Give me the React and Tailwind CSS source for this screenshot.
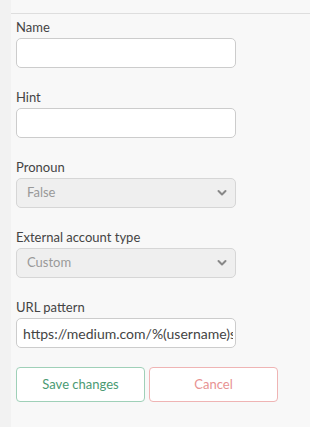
import React from "react";

function Label({ children }) {
  return <label className="block text-[13px] leading-[16px] text-[#444] mb-[3px]">{children}</label>;
}

function Chevron() {
  return (
    <svg className="absolute right-[9px] top-1/2 -translate-y-1/2" width="10" height="7" viewBox="0 0 10 7" fill="none">
      <path d="M1.5 1.5 L5 5 L8.5 1.5" stroke="#888" strokeWidth="2" strokeLinecap="round" strokeLinejoin="round" />
    </svg>
  );
}

function Select({ value }) {
  return (
    <div className="relative w-[220px] h-[30px]">
      <select
        disabled
        value={value}
        onChange={() => {}}
        className="appearance-none w-full h-full rounded-[5px] border border-[#d6d6d6] bg-[#efefef] pl-[10px] text-[13px] text-[#999]"
      >
        <option>{value}</option>
      </select>
      <Chevron />
    </div>
  );
}

export default function App() {
  return (
    <div className="flex w-[310px] h-[427px] bg-[#f2f2f2] overflow-hidden" style={{ fontFamily: "Lato, 'Liberation Sans', sans-serif" }}>
      <div className="w-[11px] shrink-0" />
      <div className="flex-1 bg-[#f8f8f8]">
        <div className="h-[14px] border-b border-[#dedede]" />
        <div className="pl-[5px] pt-[5px] flex flex-col">
          <Label>Name</Label>
          <input className="w-[220px] h-[30px] rounded-[5px] border border-[#cccccc] bg-white" />
          <div className="h-[21px]" />
          <Label>Hint</Label>
          <input className="w-[220px] h-[30px] rounded-[5px] border border-[#cccccc] bg-white" />
          <div className="h-[21px]" />
          <Label>Pronoun</Label>
          <Select value="False" />
          <div className="h-[21px]" />
          <Label>External account type</Label>
          <Select value="Custom" />
          <div className="h-[21px]" />
          <Label>URL pattern</Label>
          <input
            defaultValue="https://medium.com/%(username)s"
            className="w-[220px] h-[30px] rounded-[5px] border border-[#cccccc] bg-white pl-[6px] pr-[2px] text-[14px] text-[#444]"
          />
          <div className="flex gap-[4px] mt-[19px]">
            <button className="w-[129px] h-[35px] rounded-[4px] border border-[#9fd0b8] bg-white text-[13px] text-[#4a9a72]">
              Save changes
            </button>
            <button className="w-[129px] h-[35px] rounded-[4px] border border-[#efb4b4] bg-white text-[13px] text-[#e89292]">
              Cancel
            </button>
          </div>
        </div>
      </div>
    </div>
  );
}
